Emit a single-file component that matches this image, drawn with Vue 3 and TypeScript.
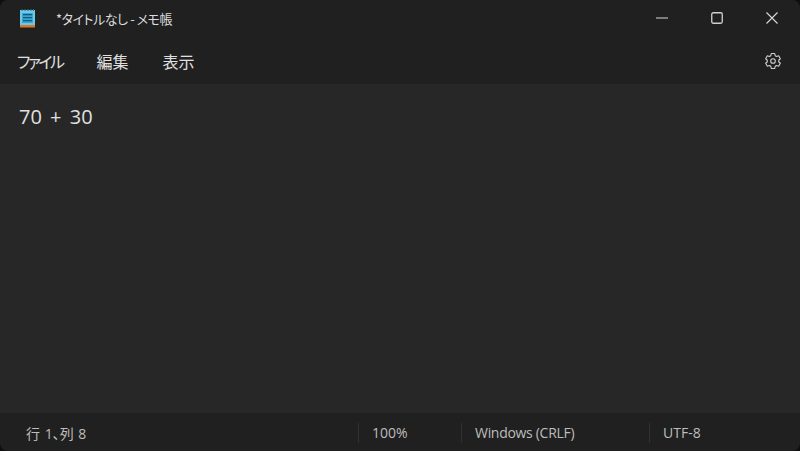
<template>
  <div class="window">
    <header class="titlebar">
      <svg class="app-icon" width="15" height="20" viewBox="0 0 15 20">
        <rect x="0" y="1" width="15" height="16" fill="#6fc8e6" />
        <path d="M2 0v2M5 0v2M8 0v2M11 0v2M13.5 0v2" stroke="#2c6f8c" stroke-width="1" />
        <rect x="0" y="16" width="15" height="2" fill="#d9772c" />
        <rect x="0" y="18" width="15" height="1" fill="#7d4a22" />
        <rect x="2" y="4" width="11" height="10" fill="#3aa6cf" />
        <rect x="3" y="5" width="9" height="1.3" fill="#0e5c85" />
        <rect x="3" y="8" width="9" height="1.3" fill="#0e5c85" />
        <rect x="3" y="11" width="9" height="1.3" fill="#0e5c85" />
      </svg>
      <span class="title">*タイトルなし - メモ帳</span>
      <div class="controls">
        <button class="control">
          <svg width="12" height="12" viewBox="0 0 12 12"><path d="M0 6h12" stroke="#d8d8d8" stroke-width="1" fill="none" /></svg>
        </button>
        <button class="control">
          <svg width="12" height="12" viewBox="0 0 12 12"><rect x="0.75" y="0.75" width="10.5" height="10.5" rx="1.5" stroke="#d0d0d0" stroke-width="1.3" fill="none" /></svg>
        </button>
        <button class="control">
          <svg width="12" height="12" viewBox="0 0 12 12"><path d="M0.5 0.5l11 11M11.5 0.5l-11 11" stroke="#d8d8d8" stroke-width="1.1" fill="none" /></svg>
        </button>
      </div>
    </header>

    <nav class="menubar">
      <span v-for="item in menuItems" :key="item" class="menu-item">{{ item }}</span>
      <svg class="settings" width="18" height="18" viewBox="0 0 18 18">
        <path d="M7.3 1.5h3.4l.5 2.2 1.3.75 2.15-.65 1.7 2.95-1.65 1.5v1.5l1.65 1.5-1.7 2.95-2.15-.65-1.3.75-.5 2.2H7.3l-.5-2.2-1.3-.75-2.15.65-1.7-2.95 1.65-1.5v-1.5l-1.65-1.5 1.7-2.95 2.15.65 1.3-.75z" stroke="#cfcfcf" stroke-width="1.1" stroke-linejoin="round" fill="none" />
        <circle cx="9" cy="9" r="2.3" stroke="#cfcfcf" stroke-width="1.1" fill="none" />
      </svg>
    </nav>

    <main class="editor">70 + 30</main>

    <footer class="statusbar">
      <span class="status-pos">行 1、列 8</span>
      <span class="status-cell zoom">100%</span>
      <span class="status-cell eol">Windows (CRLF)</span>
      <span class="status-cell enc">UTF-8</span>
    </footer>
  </div>
</template>

<script setup lang="ts">
const menuItems: string[] = ['ファイル', '編集', '表示']
</script>

<style>
html,
body {
  margin: 0;
  background: #0f0f0f;
}
</style>

<style scoped>
.window {
  width: 800px;
  height: 451px;
  display: flex;
  flex-direction: column;
  background: #202020;
  border-radius: 8px;
  overflow: hidden;
  color: #fff;
  font-family: "Open Sans", "Noto Sans CJK JP", sans-serif;
  font-feature-settings: "palt";
}

.titlebar {
  height: 38px;
  flex-shrink: 0;
  display: flex;
  align-items: center;
  padding-left: 20px;
}

.app-icon {
  flex-shrink: 0;
  margin-bottom: 1px;
}

.title {
  margin-left: 21px;
  margin-bottom: 2px;
  font-family: "Noto Sans CJK JP", sans-serif;
  font-size: 13px;
  letter-spacing: -0.45px;
  color: #dcdcdc;
}

.controls {
  margin-left: auto;
  margin-right: 1px;
  margin-bottom: 3px;
  display: flex;
}

.control {
  width: 55px;
  height: 35px;
  padding: 0;
  border: 0;
  background: transparent;
  display: flex;
  align-items: center;
  justify-content: center;
}

.menubar {
  height: 46px;
  flex-shrink: 0;
  display: flex;
  align-items: center;
  padding: 0 18px 0 17px;
  gap: 34px;
}

.menu-item {
  font-family: "Noto Sans CJK JP", sans-serif;
  font-size: 16px;
  color: #e0e0e0;
}

.menu-item:first-child {
  letter-spacing: -2.5px;
}

.settings {
  margin-left: auto;
}

.editor {
  flex: 1;
  background: #272727;
  padding: 19px 19px;
  font-size: 20px;
  line-height: 27px;
  word-spacing: 3px;
  color: #e0e0e0;
}

.statusbar {
  height: 38px;
  flex-shrink: 0;
  display: flex;
  align-items: center;
  padding-top: 2px;
  box-sizing: border-box;
  font-size: 14px;
  color: #bdbdbd;
}

.status-pos {
  width: 332px;
  padding-left: 26px;
  word-spacing: 1px;
  flex-shrink: 0;
}

.status-cell {
  height: 20px;
  line-height: 20px;
  padding-left: 13px;
  border-left: 1px solid #303030;
  flex-shrink: 0;
}

.zoom {
  width: 89px;
}

.eol {
  width: 174px;
  letter-spacing: -0.3px;
}
</style>
